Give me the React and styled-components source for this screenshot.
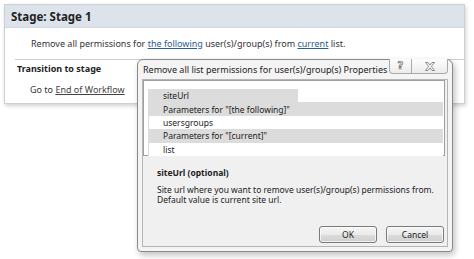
import React from "react";
import styled, { createGlobalStyle } from "styled-components";

const Global = createGlobalStyle`
  html, body { margin: 0; padding: 0; background: #fff; }
  body { font-family: "Noto Sans", "Open Sans", sans-serif; color: #222; }
`;

const Page = styled.div`
  position: relative;
  width: 474px;
  height: 259px;
  overflow: hidden;
  padding: 4px 0 0 4px;
  box-sizing: border-box;
`;

const StageBox = styled.div`
  width: 461px;
  height: 100px;
  box-sizing: border-box;
  border: 1px solid #cfcfcf;
  box-shadow: 1px 2px 4px rgba(0, 0, 0, 0.18);
  background: #fff;
`;

const StageHeader = styled.div`
  height: 22px;
  background: #dde3ea;
  border-bottom: 1px solid #d0d6dd;
  display: flex;
  align-items: center;
  padding-left: 6px;
  font-size: 11.5px;
  font-weight: 700;
  color: #222;
`;

const ActionLine = styled.div`
  height: 31px;
  display: flex;
  align-items: center;
  padding-left: 26px;
  font-size: 9px;
  color: #333;
`;

const Link = styled.span`
  color: ${(p) => (p.$muted ? "#444" : "#2b5c93")};
  text-decoration: underline;
`;

const Transition = styled.div`
  margin-left: 10px;
  border-top: 1px solid #cfcfcf;
`;

const SectionTitle = styled.div`
  height: 17px;
  display: flex;
  align-items: center;
  padding-left: 2px;
  font-size: 9px;
  font-weight: 700;
`;

const GoTo = styled.div`
  height: 25px;
  display: flex;
  align-items: center;
  padding-left: 15px;
  font-size: 9px;
  color: #333;
`;

const Dialog = styled.div`
  position: absolute;
  left: 137px;
  top: 59px;
  width: 316px;
  height: 193px;
  box-sizing: border-box;
  border: 1px solid #8a8a8a;
  border-radius: 6px 6px 4px 4px;
  background: #f4f4f4;
  box-shadow: 2px 3px 6px rgba(0, 0, 0, 0.25);
  display: flex;
  flex-direction: column;
  padding: 0 4px 4px 4px;
`;

const TitleBar = styled.div`
  height: 19px;
  display: flex;
  align-items: center;
  padding-left: 1px;
  font-size: 9px;
  color: #222;
  position: relative;
`;

const CaptionButtons = styled.div`
  position: absolute;
  right: 0;
  top: -1px;
  display: flex;
`;

const CaptionButton = styled.div`
  width: ${(p) => p.$w}px;
  height: 15px;
  box-sizing: border-box;
  border: 1px solid #a9a9a9;
  border-top: none;
  border-left: ${(p) => (p.$first ? "1px solid #a9a9a9" : "none")};
  border-radius: ${(p) => (p.$first ? "0 0 0 4px" : "0 0 4px 0")};
  background: linear-gradient(#fdfdfd, #ececec);
  display: flex;
  align-items: center;
  justify-content: center;
`;

const HelpGlyph = styled.span`
  font-family: "DejaVu Sans", sans-serif;
  font-size: 10px;
  font-weight: 700;
  line-height: 1;
  color: #fafafa;
  -webkit-text-stroke: 0.7px #6d6d6d;
`;

const Client = styled.div`
  flex: 1;
  border: 1px solid #b5b5b5;
  background: #f0f0f0;
  display: flex;
  flex-direction: column;
  padding: 0 2px 0 0;
`;

const Grid = styled.div`
  height: 76px;
  box-sizing: border-box;
  border: 1px solid #a0a0a0;
  background: #fff;
  padding: 8px 1px 0 4px;
`;

const Row = styled.div`
  height: 13.4px;
  display: flex;
  align-items: center;
  font-size: 8.5px;
  color: #222;
  background: ${(p) =>
    p.$kind === "cat"
      ? "#dcdcdc"
      : p.$kind === "sel"
      ? "linear-gradient(90deg, #dcdcdc 0, #dcdcdc 149px, #fff 149px)"
      : "#fff"};
  border-left: 1px solid #dcdcdc;
`;

const RowLabel = styled.span`
  margin-left: 14px;
`;

const Desc = styled.div`
  padding: 11px 0 0 14px;
  font-size: 8.5px;
  color: #222;
  flex: 1;
`;

const DescTitle = styled.div`
  font-weight: 700;
  line-height: 12px;
  margin-bottom: 6px;
`;

const DescText = styled.div`
  line-height: 10px;
`;

const Buttons = styled.div`
  display: flex;
  justify-content: flex-end;
  gap: 9px;
  padding: 0 1px 3px 0;
`;

const Button = styled.div`
  width: 58px;
  height: 17px;
  box-sizing: border-box;
  border: 1px solid #7a7a7a;
  border-radius: 3px;
  background: linear-gradient(#f6f6f6 0%, #eaeaea 50%, #dcdcdc 51%, #cfcfcf 100%);
  box-shadow: inset 0 0 0 1px rgba(255, 255, 255, 0.7);
  display: flex;
  align-items: center;
  justify-content: center;
  font-size: 8.5px;
  color: #222;
`;

const CloseIcon = () => (
  <svg width="10" height="9" viewBox="0 0 10 9">
    <path
      d="M0.5 0.5 H3 L5 3 L7 0.5 H9.5 L6.3 4.5 L9.5 8.5 H7 L5 6 L3 8.5 H0.5 L3.7 4.5 Z"
      fill="#fafafa"
      stroke="#707070"
      strokeWidth="0.8"
      strokeLinejoin="round"
    />
  </svg>
);

const rows = [
  { kind: "sel", text: "siteUrl" },
  { kind: "cat", text: 'Parameters for "[the following]"' },
  { kind: "", text: "usersgroups" },
  { kind: "cat", text: 'Parameters for "[current]"' },
  { kind: "", text: "list" },
];

export default function App() {
  return (
    <>
      <Global />
      <Page>
        <StageBox>
          <StageHeader>Stage: Stage 1</StageHeader>
          <ActionLine>
            Remove all permissions for&nbsp;<Link>the following</Link>&nbsp;user(s)/group(s) from&nbsp;
            <Link>current</Link>&nbsp;list.
          </ActionLine>
          <Transition>
            <SectionTitle>Transition to stage</SectionTitle>
            <GoTo>
              Go to&nbsp;<Link $muted>End of Workflow</Link>
            </GoTo>
          </Transition>
        </StageBox>
        <Dialog>
          <TitleBar>
            Remove all list permissions for user(s)/group(s) Properties
            <CaptionButtons>
              <CaptionButton $w={23} $first>
                <HelpGlyph>?</HelpGlyph>
              </CaptionButton>
              <CaptionButton $w={36}>
                <CloseIcon />
              </CaptionButton>
            </CaptionButtons>
          </TitleBar>
          <Client>
            <Grid>
              {rows.map((r) => (
                <Row key={r.text} $kind={r.kind}>
                  <RowLabel>{r.text}</RowLabel>
                </Row>
              ))}
            </Grid>
            <Desc>
              <DescTitle>siteUrl (optional)</DescTitle>
              <DescText>Site url where you want to remove user(s)/group(s) permissions from.</DescText>
              <DescText>Default value is current site url.</DescText>
            </Desc>
            <Buttons>
              <Button>OK</Button>
              <Button>Cancel</Button>
            </Buttons>
          </Client>
        </Dialog>
      </Page>
    </>
  );
}
